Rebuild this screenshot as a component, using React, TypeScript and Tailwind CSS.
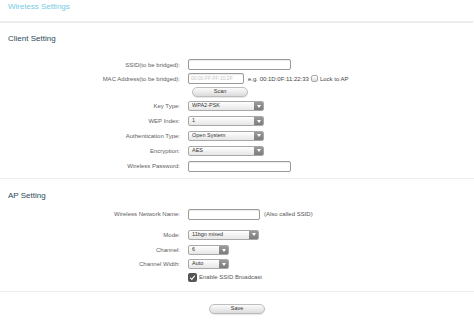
import React from "react";

const Row = ({ label, h, children }: { label?: string; h: string; children: React.ReactNode }) => (
  <div className={`flex items-center ${h}`}>
    <div className="w-[180px] shrink-0 text-right text-[6px] leading-none text-[#606060]">{label}</div>
    <div className="ml-[8px] flex items-center">{children}</div>
  </div>
);

const TextInput = ({ w, value, h = "h-[11px]" }: { w: string; value?: string; h?: string }) => (
  <div
    className={`${w} ${h} flex items-center rounded-[2px] border border-[#9a9a9a] bg-white px-[2px] text-[5px] leading-none text-[#c4c4c4] shadow-[inset_0_1px_1px_rgba(0,0,0,0.08)]`}
  >
    {value}
  </div>
);

const Select = ({ w, value }: { w: string; value: string }) => (
  <div
    className={`${w} flex h-[10px] overflow-hidden rounded-[2px] border border-[#a8a8a8] bg-gradient-to-b from-[#ffffff] to-[#e6e6e6]`}
  >
    <div className="flex flex-1 items-center pl-[3px] text-[5.5px] leading-none text-[#333]">{value}</div>
    <div className="flex w-[9px] items-center justify-center bg-gradient-to-b from-[#9a9a9a] to-[#7c7c7c]">
      <svg width="4" height="3" viewBox="0 0 4 3">
        <path d="M0 0 L4 0 L2 3 Z" fill="#ffffff" />
      </svg>
    </div>
  </div>
);

const Button = ({ label }: { label: string }) => (
  <div className="flex h-[10px] w-[56px] items-center justify-center rounded-full border border-[#bdbdbd] bg-gradient-to-b from-[#fbfbfb] to-[#dcdcdc] text-[5.5px] leading-none text-[#333] shadow-[0_1px_1px_rgba(0,0,0,0.1)]">
    {label}
  </div>
);

export default function App() {
  return (
    <div className="h-[320px] w-[474px] overflow-hidden bg-white font-['Liberation_Sans',Arial,sans-serif]">
      <div className="h-[21px] px-[8px] pt-[2px]">
        <div className="text-[8px] leading-[10px] text-[#74cbe4]">Wireless Settings</div>
      </div>
      <div className="h-[2px] w-[473px] bg-[#ececec]" />

      <div className="mt-[11px] px-[8px] text-[8px] leading-[10px] text-[#2a4b57]">Client Setting</div>

      <div className="mt-[13px]">
        <Row label="SSID(to be bridged):" h="h-[15px]">
          <TextInput w="w-[103px]" />
        </Row>
        <Row label="MAC Address(to be bridged):" h="h-[13px]">
          <TextInput w="w-[56px]" value="00:00:FF:FF:10:2F" />
          <span className="ml-[4px] text-[6px] leading-none text-[#444]">e.g. 00:1D:0F:11:22:33</span>
          <span className="ml-[2px] h-[7px] w-[7px] rounded-[2px] border border-[#aaa] bg-gradient-to-b from-[#fff] to-[#ddd]" />
          <span className="ml-[2px] text-[6px] leading-none text-[#444]">Lock to AP</span>
        </Row>
        <Row h="h-[13px]">
          <div className="ml-[4px]">
            <Button label="Scan" />
          </div>
        </Row>
        <Row label="Key Type:" h="h-[16px]">
          <Select w="w-[76px]" value="WPA2-PSK" />
        </Row>
        <Row label="WEP Index:" h="h-[14px]">
          <Select w="w-[76px]" value="1" />
        </Row>
        <Row label="Authentication Type:" h="h-[15px]">
          <Select w="w-[76px]" value="Open System" />
        </Row>
        <Row label="Encryption:" h="h-[15px]">
          <Select w="w-[76px]" value="AES" />
        </Row>
        <Row label="Wireless Password:" h="h-[16px]">
          <TextInput w="w-[103px]" />
        </Row>
      </div>

      <div className="mt-[4px] h-[1px] w-full bg-[#ececec]" />

      <div className="mt-[12px] px-[8px] text-[8px] leading-[10px] text-[#2a4b57]">AP Setting</div>

      <div className="mt-[6px]">
        <Row label="Wireless Network Name:" h="h-[14px]">
          <TextInput w="w-[72px]" />
          <span className="ml-[4px] text-[6px] leading-none text-[#555]">(Also called SSID)</span>
        </Row>
        <div className="mt-[6px]">
          <Row label="Mode:" h="h-[15px]">
            <Select w="w-[71px]" value="11bgn mixed" />
          </Row>
          <Row label="Channel:" h="h-[16px]">
            <Select w="w-[41px]" value="6" />
          </Row>
          <Row label="Channel Width:" h="h-[12px]">
            <Select w="w-[41px]" value="Auto" />
          </Row>
          <Row h="h-[14px]">
            <span className="flex h-[9px] w-[9px] items-center justify-center rounded-[2px] bg-[#555]">
              <svg width="7" height="7" viewBox="0 0 6 6">
                <path d="M1 3.2 L2.4 4.6 L5 1.4" stroke="#fff" strokeWidth="0.9" fill="none" />
              </svg>
            </span>
            <span className="ml-[2px] text-[6px] leading-none text-[#555]">Enable SSID Broadcast</span>
          </Row>
        </div>
      </div>

      <div className="mt-[7px] h-[1px] w-full bg-[#ececec]" />

      <div className="mt-[12px] flex pl-[209px]">
        <Button label="Save" />
      </div>
    </div>
  );
}
